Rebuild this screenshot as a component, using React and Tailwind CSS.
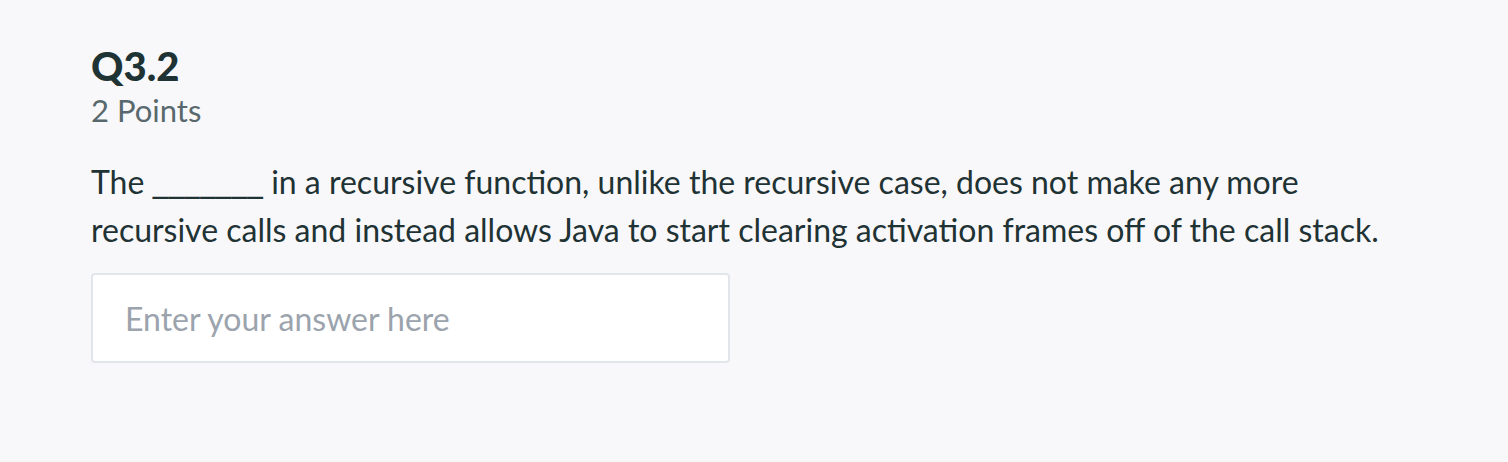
export default function App() {
  return (
    <div className="w-[1508px] h-[462px] bg-[#f8f8fa] text-[#1f3234] font-['Lato',sans-serif]">
      <div className="pl-[91px] pt-[42px] flex flex-col items-start">
        <h2 className="text-[40px] font-black leading-[48px]">Q3.2</h2>
        <div className="text-[31px] leading-[40px] text-[#59686d]">2 Points</div>
        <p className="mt-[28px] text-[32px] leading-[48px] w-[1330px]">
          The <span className="font-['Open_Sans',sans-serif] text-[36px] leading-none">_______</span> in a recursive function, unlike the recursive case, does not make any more recursive calls and instead allows Java to start clearing activation frames off of the call stack.
        </p>
        <input
          type="text"
          placeholder="Enter your answer here"
          className="mt-[19px] w-[639px] h-[90px] bg-white border-2 border-[#e2e5ea] rounded-[4px] px-[32px] text-[32px] font-['Lato',sans-serif] placeholder:text-[#9ba3ad] outline-none"
        />
      </div>
    </div>
  );
}
